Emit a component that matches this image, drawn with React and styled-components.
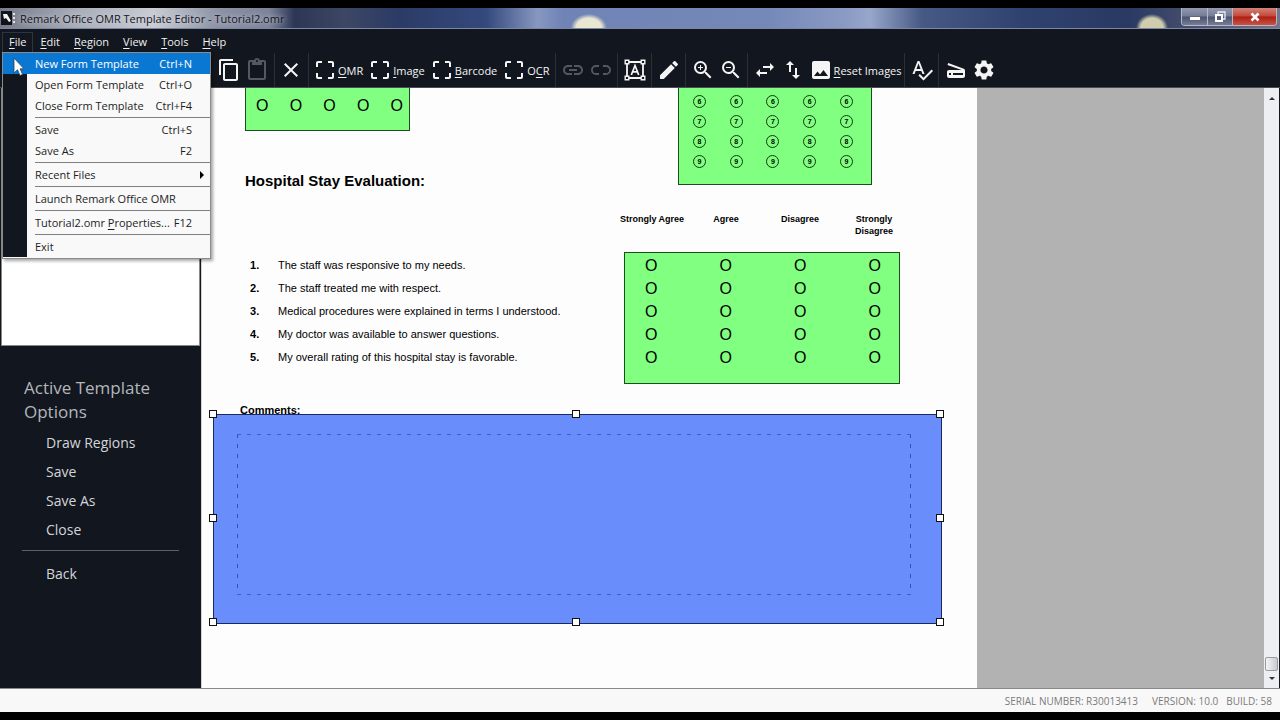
import React from "react";
import styled, { createGlobalStyle } from "styled-components";
import {
  MdContentCopy,
  MdContentPaste,
  MdContentCut,
  MdClose,
  MdCropFree,
  MdEdit,
  MdFolderOpen,
  MdImage,
  MdInsertDriveFile,
  MdLink,
  MdPrint,
  MdRedo,
  MdSave,
  MdScanner,
  MdSettings,
  MdSpellcheck,
  MdSwapHoriz,
  MdSwapVert,
  MdUndo,
  MdZoomIn,
  MdZoomOut,
} from "react-icons/md";

const menus = ["File", "Edit", "Region", "View", "Tools", "Help"];

const fileMenu = [
  [
    { label: "New Form Template", keys: "Ctrl+N", active: true },
    { label: "Open Form Template", keys: "Ctrl+O" },
    { label: "Close Form Template", keys: "Ctrl+F4" },
  ],
  [
    { label: "Save", keys: "Ctrl+S" },
    { label: "Save As", keys: "F2" },
  ],
  [{ label: "Recent Files", submenu: true }],
  [{ label: "Launch Remark Office OMR" }],
  [{ label: "Tutorial2.omr Properties...", hot: "P", keys: "F12" }],
  [{ label: "Exit" }],
];

const questions = [
  "The staff was responsive to my needs.",
  "The staff treated me with respect.",
  "Medical procedures were explained in terms I understood.",
  "My doctor was available to answer questions.",
  "My overall rating of this hospital stay is favorable.",
];

const scale = ["Strongly Agree", "Agree", "Disagree", "Strongly Disagree"];
const digits = [6, 7, 8, 9];
const actions = ["Draw Regions", "Save", "Save As", "Close"];

const handles = [
  [0, 0],
  [50, 0],
  [100, 0],
  [0, 50],
  [100, 50],
  [0, 100],
  [50, 100],
  [100, 100],
];

// underlines the accelerator letter
const Hot = ({ text, letter }) => {
  const at = text.indexOf(letter);
  if (!letter || at < 0) return text;
  return (
    <span>
      {text.slice(0, at)}
      <u>{letter}</u>
      {text.slice(at + 1)}
    </span>
  );
};

const UnlinkIcon = () => (
  <svg viewBox="0 0 24 24" width="24" height="24" fill="currentColor">
    <path d="M3.9 12a3.1 3.1 0 0 1 3.1-3.1h3V7H7a5 5 0 0 0 0 10h3v-1.900H7A3.100 3.100 0 0 1 3.900 12z" />
    <path d="M17 7h-3v1.900h3a3.100 3.100 0 0 1 0 6.200h-3V17h3a5 5 0 0 0 0-10z" />
  </svg>
);

const TextRegionIcon = () => (
  <svg viewBox="0 0 24 24" width="24" height="24" fill="none" stroke="currentColor">
    <path strokeWidth="1.800" d="M6 4h12M6 20h12M4 6v12M20 6v12" />
    <path strokeWidth="1.400" d="M2.200 2.200h3.600v3.600H2.200zM18.200 2.200h3.600v3.600h-3.600zM2.200 18.200h3.600v3.600H2.200zM18.200 18.200h3.600v3.600h-3.600z" />
    <path strokeWidth="1.700" d="M8.300 17L12 7.500 15.700 17M9.500 13.800h5" />
  </svg>
);

const App = () => {
  return (
    <>
      <GlobalStyle />
      <Window>
        <TitleBar>
          <Logo viewBox="0 0 14 14">
            <rect width="11" height="14" fill="#11131a" />
            <path d="M2 3l4 0 4 7-2 1-3-4-2 1z" fill="#f2f2f2" />
            <path d="M12 3h2M12 7h2M12 11h2" stroke="#e3e3e3" strokeWidth="2" />
          </Logo>
          <Title>Remark Office OMR Template Editor - Tutorial2.omr</Title>
          <Controls>
            <Control aria-label="Minimize">
              <svg width="12" height="12" viewBox="0 0 12 12">
                <rect x="1" y="6" width="10" height="3" fill="#fff" />
              </svg>
            </Control>
            <Control aria-label="Restore">
              <svg width="12" height="12" viewBox="0 0 12 12">
                <path d="M4 3V1h7v7H9" fill="none" stroke="#e8eaf0" strokeWidth="1.300" />
                <rect x="2" y="4" width="6" height="6" fill="none" stroke="#fff" strokeWidth="2" />
              </svg>
            </Control>
            <Control $close aria-label="Close">
              <svg width="12" height="12" viewBox="0 0 12 12">
                <path d="M2.500 2.500l7 7M9.500 2.500l-7 7" stroke="#fff" strokeWidth="2.600" />
              </svg>
            </Control>
          </Controls>
        </TitleBar>

        <MenuBar>
          {menus.map((name) => (
            <MenuName key={name} $open={name === "File"}>
              <Hot text={name} letter={name[0]} />
            </MenuName>
          ))}
          <Dropdown>
            {fileMenu.map((group, i) => (
              <Group key={i}>
                {group.map((item) => (
                  <MenuItem key={item.label} $active={item.active}>
                    <Strip />
                    <ItemLabel>
                      <Hot text={item.label} letter={item.hot} />
                    </ItemLabel>
                    <span>{item.keys}</span>
                    {item.submenu && <Arrow />}
                  </MenuItem>
                ))}
              </Group>
            ))}
          </Dropdown>
          <Pointer viewBox="0 0 12 20">
            <path
              d="M1 1v15l3.500-3.300L7 18.500l2.600-1.100-2.500-5.600H11z"
              fill="#fff"
              stroke="#23405f"
              strokeWidth="0.800"
            />
          </Pointer>
        </MenuBar>

        <ToolBar>
          <Tool aria-label="New"><MdInsertDriveFile /></Tool>
          <Tool aria-label="Open"><MdFolderOpen /></Tool>
          <Tool aria-label="Save"><MdSave /></Tool>
          <Divider />
          <Tool aria-label="Print"><MdPrint /></Tool>
          <Divider />
          <Tool aria-label="Undo"><MdUndo /></Tool>
          <Tool aria-label="Redo"><MdRedo /></Tool>
          <Divider />
          <Tool aria-label="Cut"><MdContentCut /></Tool>
          <Tool aria-label="Copy"><MdContentCopy /></Tool>
          <Tool aria-label="Paste" disabled><MdContentPaste /></Tool>
          <Divider />
          <Tool aria-label="Delete"><MdClose /></Tool>
          <Divider />
          <Tool $wide><MdCropFree /><Hot text="OMR" letter="O" /></Tool>
          <Tool $wide><MdCropFree /><Hot text="Image" letter="I" /></Tool>
          <Tool $wide><MdCropFree /><Hot text="Barcode" letter="B" /></Tool>
          <Tool $wide><MdCropFree /><Hot text="OCR" letter="C" /></Tool>
          <Divider />
          <Tool aria-label="Link" disabled><MdLink /></Tool>
          <Tool aria-label="Unlink" disabled><UnlinkIcon /></Tool>
          <Divider />
          <Tool aria-label="Text region"><TextRegionIcon /></Tool>
          <Divider />
          <Tool aria-label="Edit"><MdEdit /></Tool>
          <Divider />
          <Tool aria-label="Zoom in"><MdZoomIn /></Tool>
          <Tool aria-label="Zoom out"><MdZoomOut /></Tool>
          <Divider />
          <Tool aria-label="Fit width"><MdSwapHoriz /></Tool>
          <Tool aria-label="Fit height"><MdSwapVert /></Tool>
          <Tool $wide $tight><MdImage /><Hot text="Reset Images" letter="R" /></Tool>
          <Divider />
          <Tool aria-label="Spelling"><MdSpellcheck /></Tool>
          <Divider />
          <Tool aria-label="Scan"><MdScanner /></Tool>
          <Tool aria-label="Settings"><MdSettings /></Tool>
        </ToolBar>

        <Main>
          <SideBar>
            <Tree />
            <SideTitle>Active Template Options</SideTitle>
            <Actions>
              {actions.map((action) => (
                <Action key={action}>{action}</Action>
              ))}
            </Actions>
            <Rule />
            <Actions>
              <Action>Back</Action>
            </Actions>
          </SideBar>

          <Desk>
            <Sheet>
              <Columns>
                <Left>
                  <TopRegion>
                    {[1, 2, 3, 4, 5].map((n) => (
                      <Mark key={n}>O</Mark>
                    ))}
                  </TopRegion>
                  <Heading>Hospital Stay Evaluation:</Heading>
                  <Questions>
                    {questions.map((question, i) => (
                      <Question key={question}>
                        <b>{i + 1}.</b>
                        <span>{question}</span>
                      </Question>
                    ))}
                  </Questions>
                </Left>
                <div>
                  <DigitRegion>
                    {digits.map((digit) => (
                      <MarkRow key={digit} $height={20}>
                        {[1, 2, 3, 4, 5].map((n) => (
                          <Bubble key={n}>{digit}</Bubble>
                        ))}
                      </MarkRow>
                    ))}
                  </DigitRegion>
                  <Scale>
                    {scale.map((name) => (
                      <span key={name}>{name}</span>
                    ))}
                  </Scale>
                  <RatingRegion>
                    {questions.map((question) => (
                      <MarkRow key={question} $height={23}>
                        {scale.map((name) => (
                          <Mark key={name}>O</Mark>
                        ))}
                      </MarkRow>
                    ))}
                  </RatingRegion>
                </div>
              </Columns>
              <Comments>Comments:</Comments>
              <Selection>
                <Dashes />
                {handles.map(([x, y]) => (
                  <Handle key={`${x}-${y}`} style={{ left: `${x}%`, top: `${y}%` }} />
                ))}
              </Selection>
            </Sheet>
          </Desk>

          <ScrollBar>
            <ScrollButton aria-label="Scroll up">
              <Caret $up />
            </ScrollButton>
            <Thumb />
            <ScrollButton aria-label="Scroll down">
              <Caret />
            </ScrollButton>
          </ScrollBar>
        </Main>

        <StatusBar>
          <Serial>SERIAL NUMBER: R30013413</Serial>
          <span>VERSION: 10.0</span>
          <span>BUILD: 58</span>
        </StatusBar>
      </Window>
    </>
  );
};

export default App;

const GlobalStyle = createGlobalStyle`
  * {
    box-sizing: border-box;
  }
  body {
    margin: 0;
    background: #000;
    font-family: "Open Sans", "Noto Sans", sans-serif;
  }
  button {
    margin: 0;
    padding: 0;
    border: none;
    background: none;
    color: inherit;
    font: inherit;
  }
  u {
    text-underline-offset: 2px;
  }
`;

const Window = styled.div`
  display: flex;
  flex-direction: column;
  min-height: 100vh;
  padding: 8px 0;
  overflow: hidden;
`;

const TitleBar = styled.header`
  display: flex;
  align-items: center;
  height: 21px;
  border-bottom: 1px solid #7d86a3;
  background:
    radial-gradient(ellipse 18px 14px at 46% 100%, #e9e6d2 70%, transparent),
    radial-gradient(ellipse 16px 14px at 90% 100%, #cfcdae 70%, transparent),
    linear-gradient(
      90deg,
      #777b89 0%,
      #a9adb9 6%,
      #c9ccd3 12%,
      #8d93a5 17%,
      #7c839a 21%,
      #2c3755 23%,
      #3d4764 27%,
      #2b3b65 31%,
      #34497c 38%,
      #8797c0 42%,
      #6f83b5 44%,
      #7589b8 60%,
      #8a9ac3 66%,
      #97a6ca 68%,
      #475a85 72%,
      #2f426f 80%,
      #293962 88%,
      #454e6c 93%,
      #77758a 100%
    );
`;

const Logo = styled.svg`
  width: 14px;
  height: 14px;
  margin: 0 5px 0 1px;
`;

const Title = styled.h1`
  flex: 1;
  margin: 0;
  font-size: 11px;
  font-weight: 400;
  color: #14161f;
  text-shadow: 0 0 5px #d9dbe2;
`;

const Controls = styled.div`
  display: flex;
  align-self: flex-start;
  margin-right: 3px;
  border: 1px solid #b4b8c8;
  border-top: none;
  border-radius: 0 0 4px 4px;
  overflow: hidden;
`;

const Control = styled.button`
  display: flex;
  align-items: center;
  justify-content: center;
  width: ${(props) => (props.$close ? "44px" : "25px")};
  height: 17px;
  background: ${(props) =>
    props.$close
      ? "linear-gradient(#cf8478, #c4473a 48%, #ac1f12 52%, #cc5144)"
      : "linear-gradient(#9298ad, #757c96 48%, #4b5270 52%, #777d96)"};

  & + & {
    border-left: 1px solid #b4b8c8;
  }
`;

const MenuBar = styled.nav`
  position: relative;
  display: flex;
  height: 24px;
  padding: 3px 0 0 2px;
  background: #12161f;
  color: #f1f1f1;
`;

const MenuName = styled.button`
  height: 21px;
  padding: 0 6px 3px;
  border: 1px solid ${(props) => (props.$open ? "#30343d" : "transparent")};
  border-bottom: none;
  font-size: 11px;
`;

const Dropdown = styled.div`
  position: absolute;
  top: 23px;
  left: 2px;
  z-index: 2;
  width: 209px;
  padding-bottom: 1px;
  border: 1px solid #8b8b8b;
  background: #f9f9f9;
  box-shadow: 2px 2px 3px rgba(0, 0, 0, 0.35);
  color: #1d1d1d;
`;

const Group = styled.div`
  background: linear-gradient(90deg, #12161f 24px, transparent 24px);

  & + & {
    padding-top: 3px;
    background:
      linear-gradient(#808080, #808080) 32px 1px / 100% 1px no-repeat,
      linear-gradient(90deg, #12161f 24px, transparent 24px);
  }
`;

const MenuItem = styled.button`
  display: flex;
  align-items: center;
  width: 100%;
  height: 21px;
  padding-right: 18px;
  background: ${(props) => (props.$active ? "#0a78d2" : "transparent")};
  color: ${(props) => (props.$active ? "#fff" : "inherit")};
  font-size: 11px;
`;

const Strip = styled.span`
  width: 32px;
`;

const ItemLabel = styled.span`
  flex: 1;
  text-align: left;
  white-space: nowrap;
`;

const Arrow = styled.span`
  margin-right: -16px;
  border: 4px solid transparent;
  border-left-color: #000;
`;

const Pointer = styled.svg`
  position: absolute;
  top: 28px;
  left: 13px;
  z-index: 3;
  width: 12px;
  height: 20px;
`;

const ToolBar = styled.div`
  display: flex;
  height: 35px;
  padding-left: 1px;
  border-bottom: 1px solid #4a4c52;
  background: #12161f;
  color: #f4f4f4;
`;

const Tool = styled.button`
  display: flex;
  flex: none;
  align-items: center;
  justify-content: center;
  gap: 1px;
  width: ${(props) => (props.$wide ? "auto" : "28px")};
  padding: ${(props) => (props.$wide ? "0 3px 0 2px" : "0")};
  padding-right: ${(props) => props.$tight && "0"};
  color: ${(props) => (props.disabled ? "#55585f" : "inherit")};
  font-size: 11px;

  svg {
    width: 24px;
    height: 24px;
  }
`;

const Divider = styled.span`
  flex: none;
  width: 6px;
  background: linear-gradient(#2a2e37, #2a2e37) center / 1px 100% no-repeat;
`;

const Main = styled.main`
  display: flex;
  flex: 1;
  padding-right: 1px;
  background: #12161f;
`;

const SideBar = styled.aside`
  width: 201px;
  color: #d3d5d9;
`;

const Tree = styled.div`
  height: 258px;
  margin: 0 1px;
  border: 1px solid #888;
  background: #fff;
`;

const SideTitle = styled.h2`
  margin: 30px 24px 0;
  font-size: 17px;
  font-weight: 400;
  line-height: 24px;
  color: #b4b6bb;
`;

const Actions = styled.div`
  display: flex;
  flex-direction: column;
  padding: 4px 0 0 46px;
`;

const Action = styled.button`
  height: 29px;
  font-size: 14px;
  text-align: left;
`;

const Rule = styled.hr`
  height: 1px;
  margin: 6px 22px 4px;
  border: none;
  background: #5d6068;
`;

const Desk = styled.div`
  flex: 1;
  background: #b2b2b2;
`;

const Sheet = styled.div`
  width: 73%;
  height: 100%;
  border-left: 1px solid #d5d5d5;
  background: #fdfdfe;
  color: #000;
  font-family: "Liberation Sans", Arial, sans-serif;
`;

const Columns = styled.div`
  display: grid;
  grid-template-columns: 1fr 296px;
  padding: 0 66px 0 43px;
`;

const Left = styled.div`
  display: flex;
  flex-direction: column;
`;

const Region = styled.div`
  border: 1px solid #1d4d1d;
  background: #80ff80;
`;

const TopRegion = styled(Region)`
  display: flex;
  justify-content: space-between;
  width: 165px;
  height: 43px;
  padding: 8px 6px 0 10px;
  border-top: none;
`;

const DigitRegion = styled(Region)`
  width: 194px;
  height: 97px;
  margin-left: 63px;
  padding: 3px 18px 0 14px;
  border-top: none;
`;

const RatingRegion = styled(Region)`
  height: 132px;
  margin: 14px 11px 0 9px;
  padding: 1px 18px 0 20px;
`;

const MarkRow = styled.div`
  display: flex;
  align-items: center;
  justify-content: space-between;
  height: ${(props) => props.$height}px;
`;

const Mark = styled.span`
  font-size: 16px;
  line-height: 20px;
`;

const Bubble = styled.span`
  width: 13px;
  height: 13px;
  border: 1px solid #0d3d0d;
  border-radius: 50%;
  font-size: 7px;
  font-weight: 700;
  line-height: 11px;
  text-align: center;
`;

const Heading = styled.h3`
  margin: 40px 0 0;
  font-size: 15px;
  line-height: 20px;
`;

const Questions = styled.ol`
  margin: 63px 0 0 5px;
  padding: 0;
  list-style: none;
`;

const Question = styled.li`
  display: grid;
  grid-template-columns: 28px 1fr;
  font-size: 11px;
  line-height: 23px;
  white-space: nowrap;
`;

const Scale = styled.div`
  display: grid;
  grid-template-columns: repeat(4, 1fr);
  margin-top: 28px;
  height: 25px;
  font-size: 9px;
  font-weight: 700;
  line-height: 12px;
  text-align: center;
`;

const Comments = styled.h4`
  height: 10px;
  margin: 20px 0 0 38px;
  font-size: 11px;
  line-height: 12px;
`;

const Selection = styled.div`
  position: relative;
  height: 210px;
  margin: 0 35px 0 11px;
  padding: 19px 30px 28px 23px;
  border: 1px solid #1b2a5e;
  background: #698efc;
`;

const Dashes = styled.div`
  height: 100%;
  background:
    repeating-linear-gradient(90deg, #4360c4 0 4px, transparent 4px 10px) top / 100% 1px no-repeat,
    repeating-linear-gradient(90deg, #4360c4 0 4px, transparent 4px 10px) bottom / 100% 1px no-repeat,
    repeating-linear-gradient(#3450b4 0 4px, transparent 4px 10px) left / 1px 100% no-repeat,
    repeating-linear-gradient(#3450b4 0 4px, transparent 4px 10px) right / 1px 100% no-repeat;
`;

const Handle = styled.span`
  position: absolute;
  width: 8px;
  height: 8px;
  margin: -5px 0 0 -5px;
  border: 1px solid #111;
  background: #fff;
`;

const ScrollBar = styled.div`
  display: flex;
  flex-direction: column;
  width: 15px;
  background: #eeeff1;
`;

const ScrollButton = styled.button`
  display: flex;
  align-items: center;
  justify-content: center;
  height: 17px;
`;

const Caret = styled.span`
  border: 3px solid transparent;
  border-top-color: ${(props) => (props.$up ? "transparent" : "#333")};
  border-bottom-color: ${(props) => (props.$up ? "#333" : "transparent")};
`;

const Thumb = styled.div`
  height: 14px;
  margin: auto 1px 0;
  border: 1px solid #979a9f;
  border-radius: 2px;
  background: linear-gradient(90deg, #f4f4f4, #c6cad0);
`;

const StatusBar = styled.footer`
  display: flex;
  align-items: center;
  justify-content: flex-end;
  gap: 8px;
  height: 24px;
  padding-right: 8px;
  border-top: 1px solid #8a8a8a;
  background: #f8f8f8;
  color: #7b7b7b;
  font-size: 10px;
`;

const Serial = styled.span`
  margin-right: 6px;
`;
